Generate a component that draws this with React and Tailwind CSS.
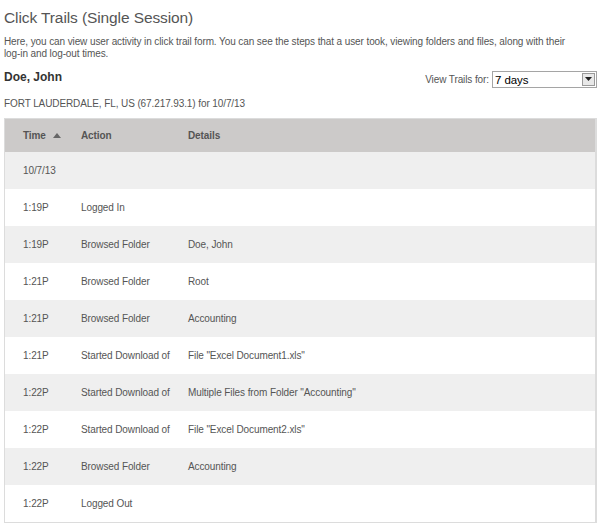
import { useState } from "react";

const rows = [
  { time: "10/7/13", action: "", details: "" },
  { time: "1:19P", action: "Logged In", details: "" },
  { time: "1:19P", action: "Browsed Folder", details: "Doe, John" },
  { time: "1:21P", action: "Browsed Folder", details: "Root" },
  { time: "1:21P", action: "Browsed Folder", details: "Accounting" },
  { time: "1:21P", action: "Started Download of", details: 'File "Excel Document1.xls"' },
  { time: "1:22P", action: "Started Download of", details: 'Multiple Files from Folder "Accounting"' },
  { time: "1:22P", action: "Started Download of", details: 'File "Excel Document2.xls"' },
  { time: "1:22P", action: "Browsed Folder", details: "Accounting" },
  { time: "1:22P", action: "Logged Out", details: "" },
];

const App = () => {
  const [range, setRange] = useState("7 days");

  return (
    <div className="w-[600px] h-[524px] bg-white px-1 text-[#555] font-['Liberation_Sans',Arial,sans-serif] overflow-hidden">
      <h1 className="text-[15.5px] leading-5 pt-[8px] text-[#555] tracking-[-0.1px]">Click Trails (Single Session)</h1>
      <p className="mt-[8px] max-w-[565px] text-[10px] leading-[12px] tracking-[-0.1px]">
        Here, you can view user activity in click trail form. You can see the steps that a user took, viewing folders and files, along with their
        log-in and log-out times.
      </p>

      <div className="flex items-center justify-between mt-[8px] h-[18px]">
        <h2 className="text-[12px] font-bold text-[#333]">Doe, John</h2>
        <div className="flex items-center gap-[3px] text-[10px] tracking-[-0.1px] mt-[4px] -mr-[1px]">
          <span>View Trails for:</span>
          <div className="relative w-[105px] h-[17px] border border-[#a5a5a5] bg-white flex items-center">
            <select
              value={range}
              onChange={(e) => setRange(e.target.value)}
              className="appearance-none w-full h-full pl-[2px] text-[11.5px] text-black bg-transparent outline-none"
            >
              <option>7 days</option>
              <option>30 days</option>
              <option>90 days</option>
            </select>
            <div className="absolute right-[1px] top-[1px] w-[13px] h-[13px] bg-[#e8e8e8] border border-[#9a9a9a] flex items-center justify-center pointer-events-none">
              <svg width="7" height="4" viewBox="0 0 7 4">
                <path d="M0 0h7L3.5 4z" fill="#222" />
              </svg>
            </div>
          </div>
        </div>
      </div>

      <p className="text-[10px] mt-[12px] leading-[12px] tracking-[-0.1px]">FORT LAUDERDALE, FL, US (67.217.93.1) for 10/7/13</p>

      <div className="mt-[8px] w-[593px] border border-[#dcdcdc] border-r-2">
        <div className="flex items-center h-[33px] bg-[#cccac9] text-[10px] font-bold text-[#555] tracking-[-0.1px]">
          <div className="w-[76px] pl-[18px] flex items-center gap-[7px]">
            Time
            <svg width="8" height="5" viewBox="0 0 8 5">
              <path d="M0 5L4 0l4 5z" fill="#666" />
            </svg>
          </div>
          <div className="w-[107px]">Action</div>
          <div>Details</div>
        </div>
        {rows.map((r, i) => (
          <div
            key={i}
            className={`flex items-center h-[37px] text-[10px] tracking-[-0.1px] text-[#555] ${i % 2 === 0 ? "bg-[#efefef]" : "bg-white"}`}
          >
            <div className="w-[76px] pl-[18px]">{r.time}</div>
            <div className="w-[107px]">{r.action}</div>
            <div>{r.details}</div>
          </div>
        ))}
      </div>
    </div>
  );
};

export default App;
